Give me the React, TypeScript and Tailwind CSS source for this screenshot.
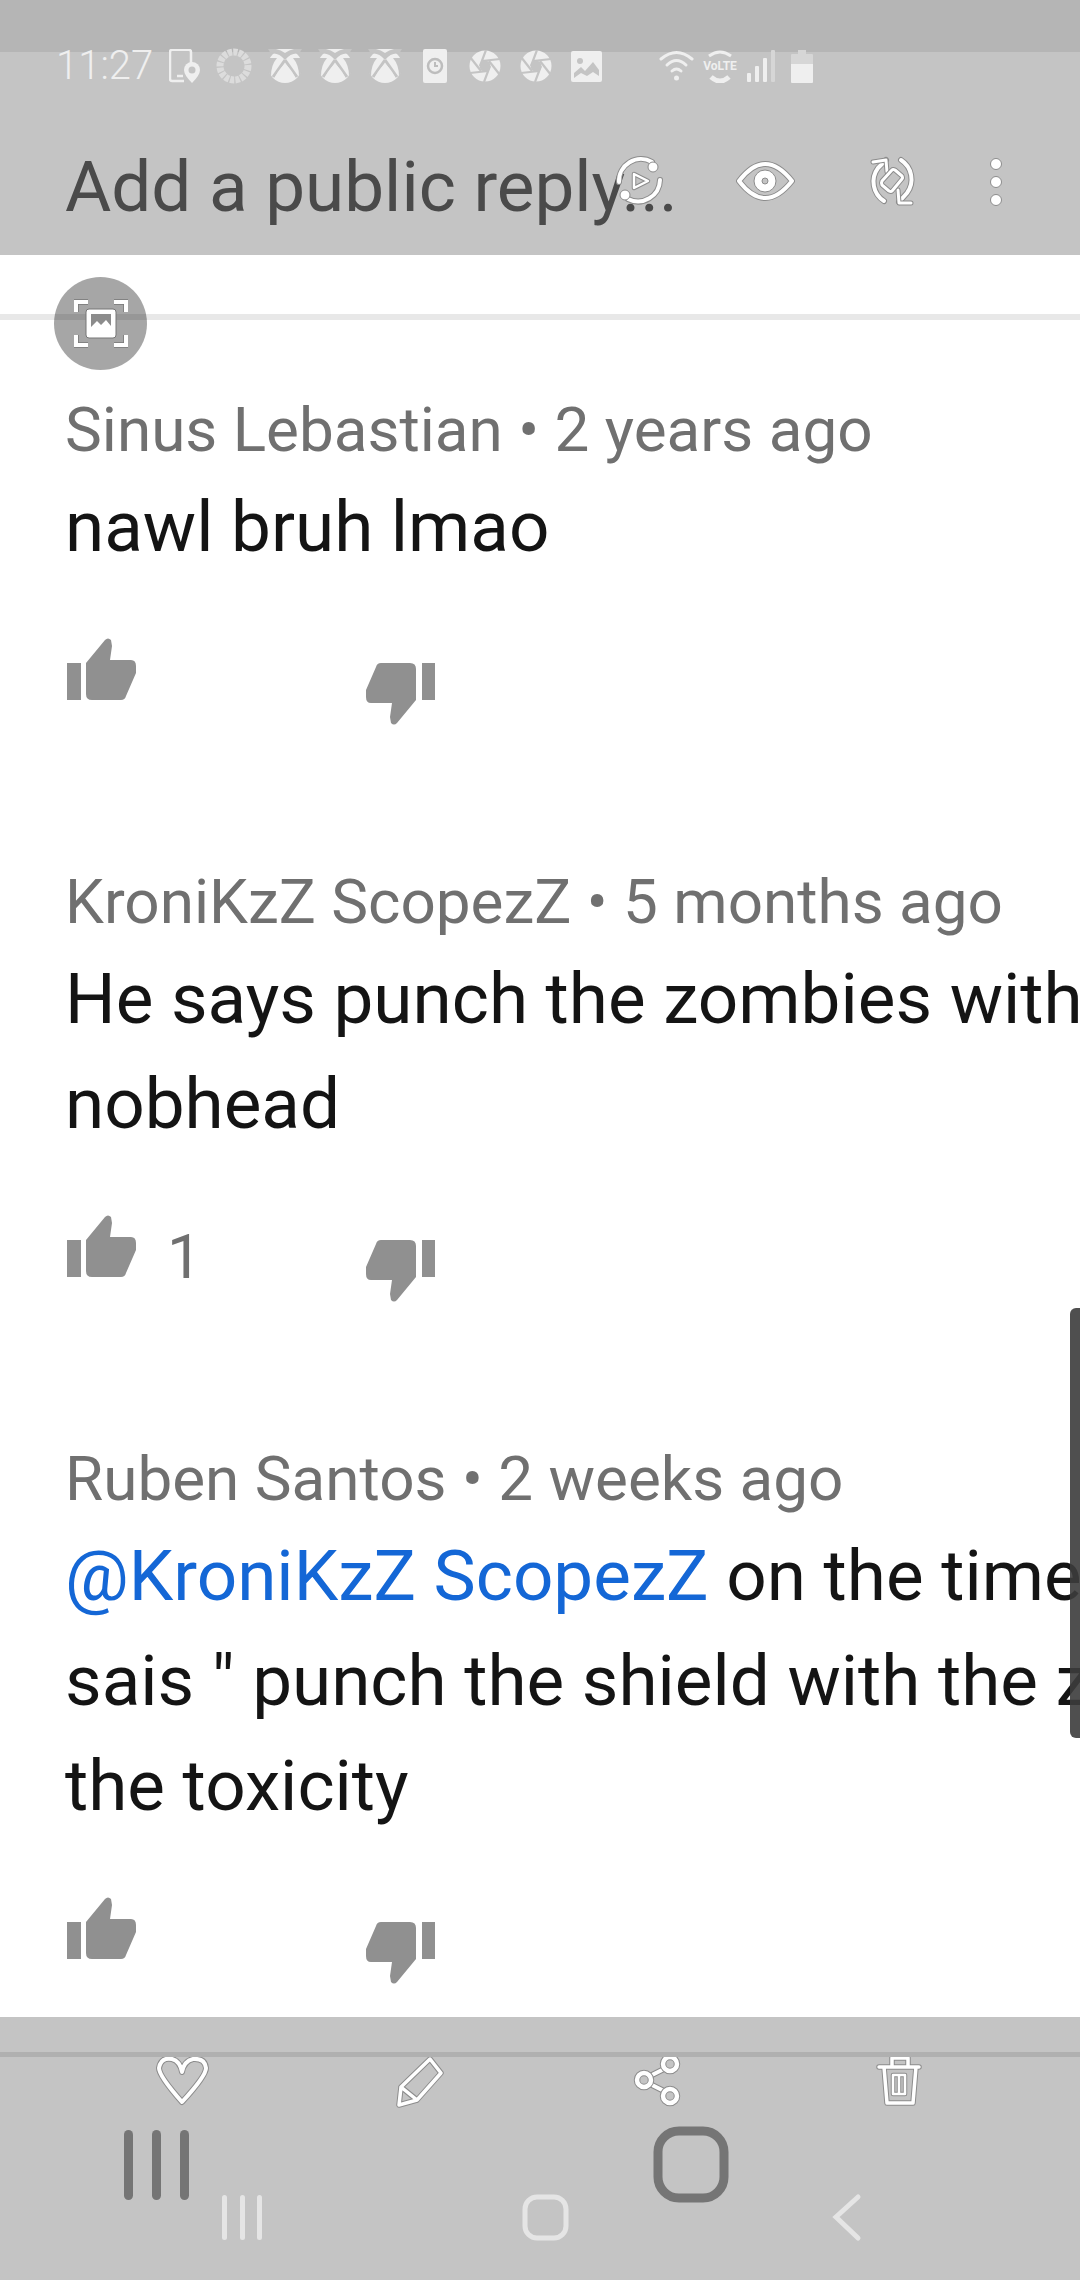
import React from "react";

const font = { fontFamily: "Roboto, sans-serif" };

// white glyph with thin grey edge, used by the overlay toolbars
const Edged = ({ d, w = 4 }: { d: string; w?: number }) => (
  <>
    <path d={d} fill="none" stroke="#8c8c8c" strokeWidth={w + 2} strokeLinecap="round" strokeLinejoin="round" />
    <path d={d} fill="none" stroke="#ffffff" strokeWidth={w} strokeLinecap="round" strokeLinejoin="round" />
  </>
);

const Ring = ({ cx, cy }: { cx: number; cy: number }) => (
  <>
    <circle cx={cx} cy={cy} r="7" fill="#c4c4c4" stroke="#8c8c8c" strokeWidth="6.5" />
    <circle cx={cx} cy={cy} r="7" fill="none" stroke="#ffffff" strokeWidth="4.5" />
  </>
);

const Xbox = () => (
  <svg width="34" height="34" viewBox="0 0 34 34" className="shrink-0">
    <circle cx="17" cy="17" r="17" fill="#efefef" />
    <path d="M17 11 Q10 3 3 5 L0 0 H34 L31 5 Q24 3 17 11Z" fill="#c4c4c4" />
    <path d="M8 0 Q13 1 17 4 Q21 1 26 0Z" fill="#efefef" />
    <path d="M9 9 Q3 16 3 27 L0 22 V9Z" fill="#c4c4c4" />
    <path d="M25 9 Q31 16 31 27 L34 22 V9Z" fill="#c4c4c4" />
    <path d="M17 11 L5 28 M17 11 L29 28" stroke="#c4c4c4" strokeWidth="3" />
    <path d="M17 15 Q11 20 7 28 Q17 38 27 28 Q23 20 17 15Z" fill="#efefef" />
  </svg>
);

const Aperture = () => (
  <svg width="32" height="32" viewBox="0 0 32 32" className="shrink-0">
    <circle cx="16" cy="16" r="15.5" fill="#efefef" />
    <g stroke="#c4c4c4" strokeWidth="2.2">
      <path d="M11 16 L17 0" />
      <path d="M13 11 L31 9" />
      <path d="M20 11 L31 25" />
      <path d="M21 16 L15 32" />
      <path d="M19 21 L1 23" />
      <path d="M12 21 L1 7" />
    </g>
    <circle cx="16" cy="16" r="5.5" fill="#c4c4c4" />
  </svg>
);

const StatusIcons = () => (
  <div className="flex h-[36px] items-center pl-[56px] mt-[-4px]">
    <span className="w-[113px] text-[40px] leading-none font-light text-[#efefef]">11:27</span>
    <svg width="31" height="34" viewBox="0 0 31 34" className="shrink-0">
      <path d="M15 32 H3 Q1 32 1 30 V3 Q1 1 3 1 H20 Q22 1 22 3 V14" fill="none" stroke="#efefef" strokeWidth="2.5" />
      <path d="M8 27 H14" stroke="#efefef" strokeWidth="2.5" />
      <path d="M23 34 Q15 26 15 21 A8 8 0 0 1 31 21 Q31 26 23 34Z" fill="#efefef" />
      <circle cx="23" cy="21" r="3.5" fill="#c4c4c4" />
    </svg>
    <svg width="36" height="36" viewBox="0 0 36 36" className="ml-[16px] shrink-0">
      <circle cx="18" cy="18" r="14" fill="none" stroke="#dcdcdc" strokeWidth="7" strokeDasharray="4.2 1.2" />
    </svg>
    <div className="ml-[16px] flex shrink-0 gap-[16px]">
      <Xbox />
      <Xbox />
      <Xbox />
    </div>
    <svg width="24" height="34" viewBox="0 0 24 34" className="ml-[21px] shrink-0">
      <rect width="24" height="34" rx="2" fill="#efefef" />
      <circle cx="12" cy="17" r="7" fill="none" stroke="#bdbdbd" strokeWidth="2.5" />
      <path d="M12 13 V17 H15" fill="none" stroke="#bdbdbd" strokeWidth="2" />
    </svg>
    <div className="ml-[22px] flex shrink-0 gap-[19px]">
      <Aperture />
      <Aperture />
    </div>
    <svg width="31" height="31" viewBox="0 0 31 31" className="ml-[19px] shrink-0">
      <rect width="31" height="31" rx="2" fill="#efefef" />
      <circle cx="9" cy="10" r="3" fill="#c4c4c4" />
      <path d="M3 22 L10 16 L14 20 L22 11 L28 19 V25 L22 21 L16 25 L10 22 L3 27Z" fill="#c4c4c4" />
    </svg>
    <svg width="35" height="32" viewBox="0 0 35 32" className="ml-[57px] shrink-0">
      <g fill="none" stroke="#efefef" strokeWidth="3" strokeLinecap="round">
        <path d="M2 9 Q17.5 -4 33 9" />
        <path d="M8 15 Q17.5 6 27 15" />
        <path d="M13 21 Q17.5 17 22 21" />
      </g>
      <circle cx="17.5" cy="28" r="2.5" fill="#efefef" />
    </svg>
    <div className="relative ml-[11px] flex h-[34px] w-[30px] shrink-0 items-center justify-center">
      <svg width="30" height="34" viewBox="0 0 30 34" className="absolute">
        <g fill="none" stroke="#efefef" strokeWidth="3">
          <path d="M4 7 Q15 -1 26 7" />
          <path d="M6 28 Q15 36 24 28" strokeWidth="5" />
        </g>
      </svg>
      <span className="relative text-[12px] leading-none font-bold text-[#efefef]">VoLTE</span>
    </div>
    <svg width="28" height="32" viewBox="0 0 28 32" className="ml-[12px] shrink-0">
      <rect x="0" y="23" width="4" height="9" rx="1" fill="#efefef" />
      <rect x="8" y="16" width="4" height="16" rx="1" fill="#efefef" />
      <rect x="16" y="8" width="4" height="24" rx="1" fill="#efefef" />
      <rect x="24" y="0" width="4" height="32" rx="1" fill="#d6d6d6" />
    </svg>
    <svg width="22" height="33" viewBox="0 0 22 33" className="ml-[16px] shrink-0">
      <path d="M7 0 H15 V4 H21 Q22 4 22 5 V14 H0 V5 Q0 4 1 4 H7Z" fill="#d6d6d6" />
      <path d="M0 14 H22 V32 Q22 33 21 33 H1 Q0 33 0 32Z" fill="#efefef" />
    </svg>
  </div>
);

const HeaderIcons = () => (
  <svg className="absolute left-[610px] top-[150px]" width="400" height="64" viewBox="610 150 400 64">
    {/* sync play */}
    <Edged d="M619 182 A22 22 0 0 1 652 162" />
    <Edged d="M660 180 A22 22 0 0 1 628 199" />
    <circle cx="653" cy="167" r="5" fill="#fff" stroke="#8c8c8c" strokeWidth="1" />
    <circle cx="625" cy="195" r="5" fill="#fff" stroke="#8c8c8c" strokeWidth="1" />
    <Edged d="M634 174 L648 181 L634 188Z" w={2.5} />
    {/* eye */}
    <Edged d="M739 181 Q765 147 792 181 Q765 215 739 181Z" />
    <circle cx="765" cy="181" r="11" fill="#fff" stroke="#8c8c8c" strokeWidth="1" />
    <circle cx="765" cy="181" r="3" fill="#c4c4c4" stroke="#8c8c8c" strokeWidth="1" />
    {/* rotate */}
    <Edged d="M884 201 A23 23 0 0 1 878 168 L886 160" />
    <Edged d="M873 162 L886 160 L887 172" w={3} />
    <Edged d="M901 160 A23 23 0 0 1 907 193 L899 202" />
    <Edged d="M898 190 L899 203 L911 203" w={3} />
    <Edged d="M882 181 L892 170 Q893 169 895 170 L902 176 Q903 178 902 179 L892 191 Q891 192 889 191 L882 185 Q881 183 882 181Z" w={3} />
  </svg>
);

const Dots = () => (
  <div className="absolute left-[990px] top-[158px] flex flex-col gap-[6px]">
    <span className="h-[12px] w-[12px] rounded-full border border-[#8c8c8c] bg-white" />
    <span className="h-[12px] w-[12px] rounded-full border border-[#8c8c8c] bg-white" />
    <span className="h-[12px] w-[12px] rounded-full border border-[#8c8c8c] bg-white" />
  </div>
);

const ThumbUp = () => (
  <svg width="70" height="62" viewBox="0 0 70 62" fill="#909090">
    <rect x="0" y="25" width="14" height="37" />
    <path d="M19 25 L38 2 Q41 -1 44 2 L45 8 L43 22 L64 22 Q69 22 69 28 L69 35 L59 58 Q58 62 54 62 L25 62 Q19 62 19 56Z" />
  </svg>
);

const ThumbDown = () => (
  <svg width="70" height="62" viewBox="0 0 70 62" fill="#909090">
    <rect x="56" y="0" width="13" height="37" />
    <path d="M50 37 L31 60 Q28 63 25 60 L24 54 L26 40 L5 40 Q0 40 0 34 L0 27 L10 4 Q11 0 15 0 L44 0 Q50 0 50 6Z" />
  </svg>
);

type Comment = {
  author: string;
  when: string;
  lines: React.ReactNode[];
  likes?: string;
  gap: string;
};

const comments: Comment[] = [
  { author: "Sinus Lebastian", when: "2 years ago", lines: ["nawl bruh lmao"], gap: "h-[158px]" },
  {
    author: "KroniKzZ ScopezZ",
    when: "5 months ago",
    lines: ["He says punch the zombies with", "nobhead"],
    likes: "1",
    gap: "h-[158px]",
  },
  {
    author: "Ruben Santos",
    when: "2 weeks ago",
    lines: [
      <>
        <span className="text-[#1467d6]">@KroniKzZ ScopezZ</span> on the time
      </>,
      'sais " punch the shield with the z',
      "the toxicity",
    ],
    gap: "h-0",
  },
];

const CommentRow = ({ c }: { c: Comment }) => (
  <div className="pl-[65px]">
    <div className="text-[62px] leading-[88px] whitespace-nowrap text-[#707070]">
      {c.author} • {c.when}
    </div>
    {c.lines.map((line, i) => (
      <div key={i} className="text-[71px] leading-[105px] whitespace-nowrap text-[#141414]">
        {line}
      </div>
    ))}
    <div className="mt-[59px] flex h-[62px] items-start pl-[2px]">
      <div className="flex w-[299px] items-start">
        <ThumbUp />
        {c.likes && <span className="ml-[30px] mt-[11px] text-[62px] leading-none text-[#707070]">{c.likes}</span>}
      </div>
      <div className="mt-[25px]">
        <ThumbDown />
      </div>
    </div>
    <div className={c.gap} />
  </div>
);

const BottomBar = () => (
  <div className="h-[263px] bg-[#c4c4c4]">
    <div className="h-[35px]" />
    <div className="h-[5px] bg-[#b0b0b0]" />
    <div className="relative">
      <svg className="absolute left-0 top-0" width="1080" height="223" viewBox="0 2057 1080 223">
        <Edged d="M182 2102 Q159 2076 159 2068 Q161 2057 172 2059 Q180 2061 182 2072 Q184 2061 193 2059 Q205 2058 206 2068 Q206 2076 182 2102Z" />
        <Edged d="M430 2059 L441 2073 L417 2100 L399 2105 L401 2087Z M401 2087 L417 2100" w={3.5} />
        <Edged d="M664 2069 L650 2076 M650 2084 L664 2091" w={4} />
        <Ring cx={670} cy={2064} />
        <Ring cx={644} cy={2080} />
        <Ring cx={670} cy={2096} />
        <Edged d="M879 2067 H919 M884 2067 L887 2103 H913 L916 2067 M892 2066 V2058 H908 V2066" w={3.5} />
        <Edged d="M893 2075 H905 V2094 H893Z M899 2075 V2094" w={2.5} />

        <g fill="#757575">
          <rect x="124" y="2130" width="9" height="70" rx="4.5" />
          <rect x="152" y="2130" width="9" height="70" rx="4.5" />
          <rect x="180" y="2130" width="9" height="70" rx="4.5" />
        </g>
        <rect x="658" y="2131" width="66" height="67" rx="21" fill="none" stroke="#757575" strokeWidth="9" />

        <g fill="#e5e5e5">
          <rect x="222" y="2195" width="5" height="45" rx="2.5" />
          <rect x="240" y="2195" width="5" height="45" rx="2.5" />
          <rect x="257" y="2195" width="5" height="45" rx="2.5" />
        </g>
        <rect x="525" y="2197" width="41" height="41" rx="12" fill="none" stroke="#e5e5e5" strokeWidth="5" />
        <path d="M858 2197 L836 2217 L858 2238" fill="none" stroke="#e5e5e5" strokeWidth="5" strokeLinecap="round" />
      </svg>
    </div>
  </div>
);

export default function App() {
  return (
    <div className="relative flex h-[2280px] w-[1080px] flex-col overflow-hidden bg-white" style={font}>
      <div className="h-[255px] shrink-0 bg-[#c4c4c4]">
        <div className="h-[52px] bg-[#b5b5b5]" />
        <StatusIcons />
        <div className="pl-[65px] pt-[58px] text-[71px] leading-[90px] whitespace-nowrap text-[#4a4a4a]">
          Add a public reply...
        </div>
      </div>
      <div className="flex-1 overflow-hidden">
        <div className="mt-[59px] h-[6px] bg-[#e8e8e8]" />
        <div className="pt-[66px]">
          {comments.map((c) => (
            <CommentRow key={c.author} c={c} />
          ))}
        </div>
      </div>
      <BottomBar />

      <HeaderIcons />
      <Dots />

      {/* floating screenshot button */}
      <div className="absolute left-[54px] top-[277px] flex h-[93px] w-[93px] items-center justify-center rounded-full bg-black/35">
        <svg width="54" height="49" viewBox="0 0 54 49" fill="none">
          <path d="M2 13 V3 H14 M40 3 H52 V13 M2 36 V46 H14 M40 46 H52 V36" stroke="#777" strokeWidth="5.5" />
          <path d="M2 13 V3 H14 M40 3 H52 V13 M2 36 V46 H14 M40 46 H52 V36" stroke="#fff" strokeWidth="4" />
          <rect x="12" y="10" width="30" height="29" rx="3" fill="#fff" stroke="#777" strokeWidth="1" />
          <path d="M17 28 L23 22 L27 26 L32 21 L37 27 V15 H17Z" fill="#8c8c8c" />
        </svg>
      </div>

      {/* scrollbar */}
      <div className="absolute left-[1070px] top-[1308px] h-[430px] w-[10px] rounded-l-[6px] bg-[#3c3c3c]/90" />
    </div>
  );
}
